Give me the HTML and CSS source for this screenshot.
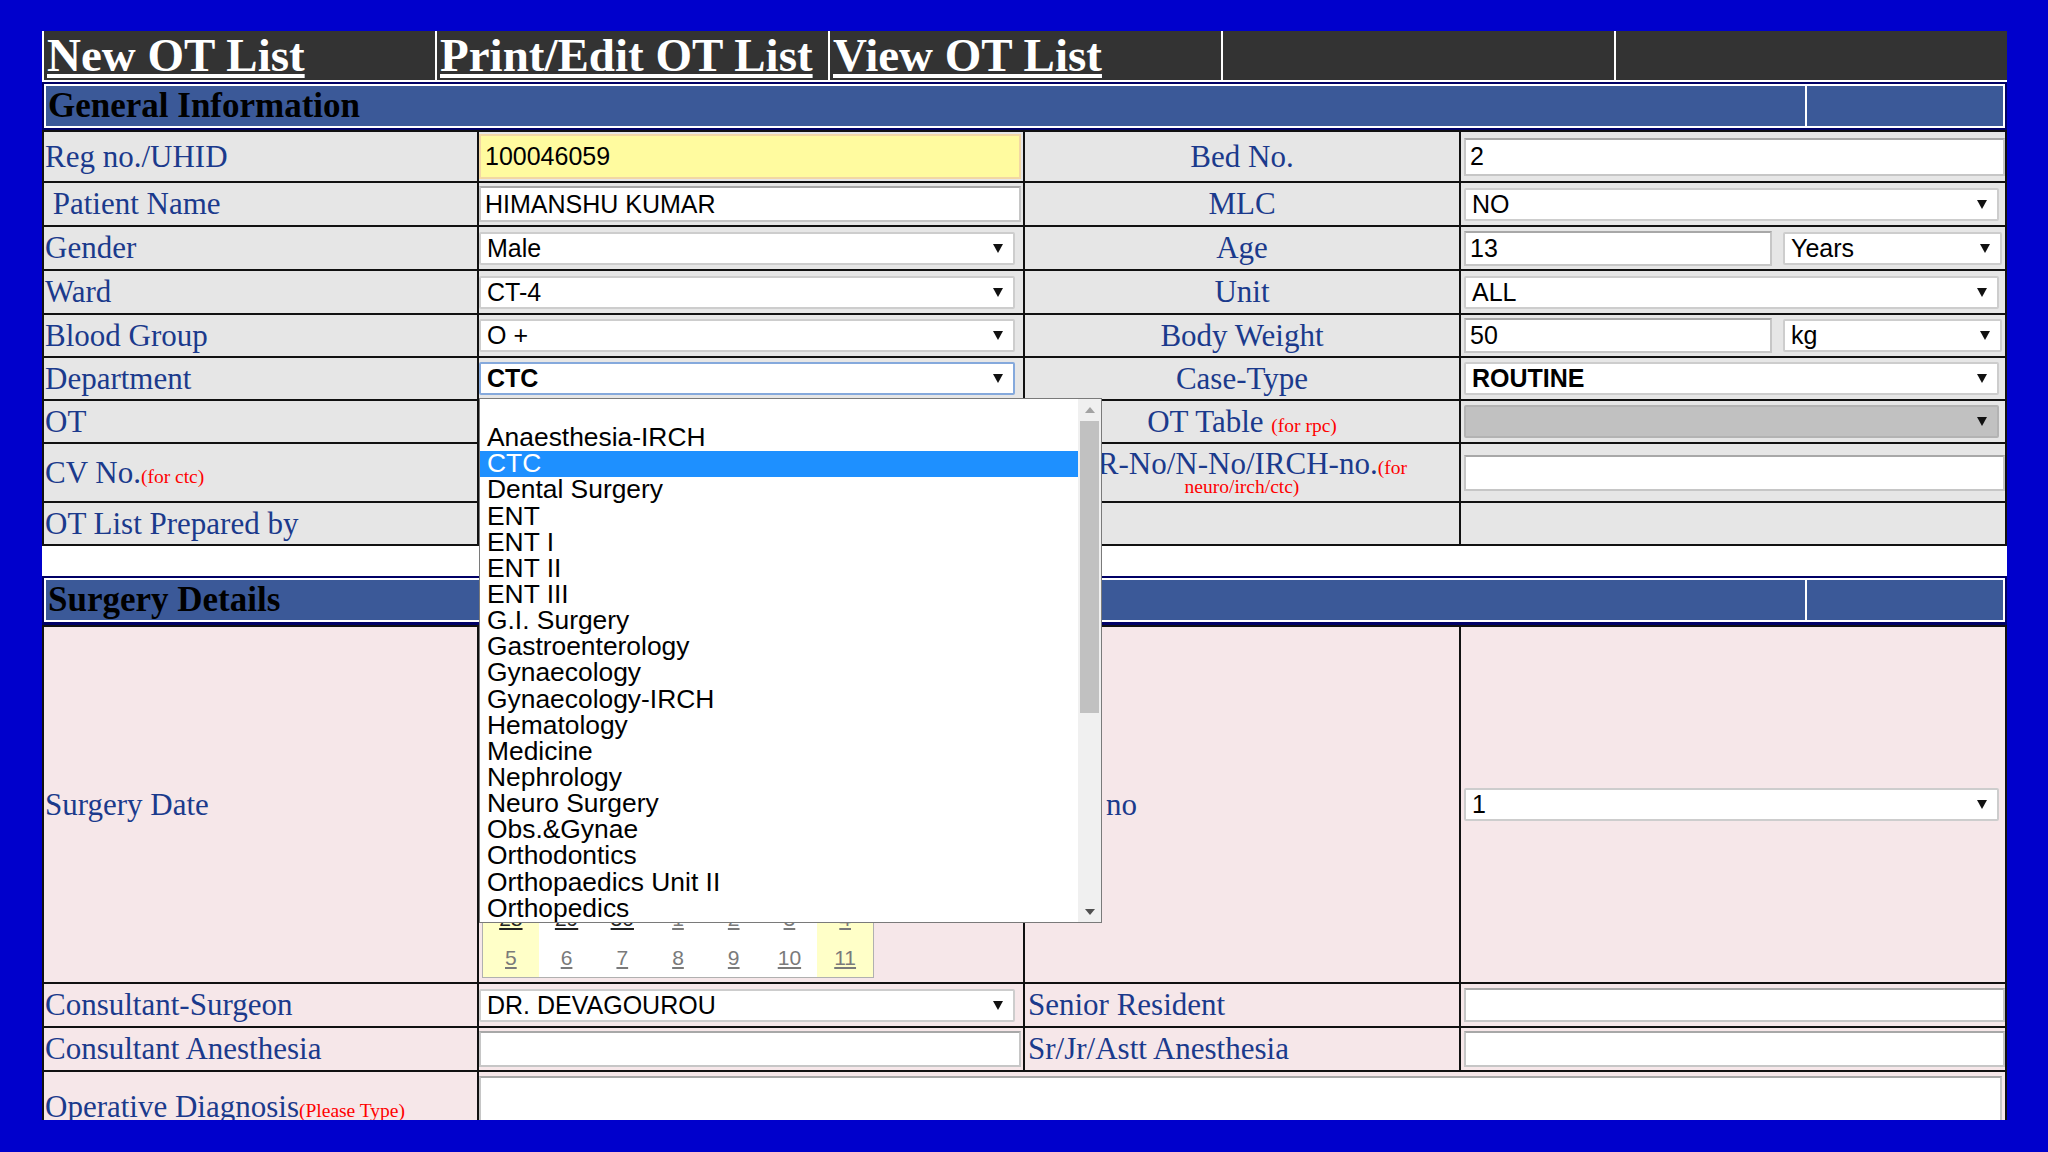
FILE: index.html
```html
<!DOCTYPE html>
<html>
  <head>
    <link rel="stylesheet" href="styles.css">
  </head>
  <body>
    <div class="page">
      <div class="top-nav">
        <div class="nav-cell"><a href="#">New OT List</a></div>
        <div class="nav-cell"><a href="#">Print/Edit OT List</a></div>
        <div class="nav-cell"><a href="#">View OT List</a></div>
        <div class="nav-cell"></div>
        <div class="nav-cell"></div>
      </div>

      <div class="section-wrap">
        <div class="section-head">
          <div class="head-title">General Information</div>
          <div class="head-end"></div>
        </div>
      </div>

      <div class="form general">
        <div class="cell"><span class="label">Reg no./UHID</span></div>
        <div class="cell val"><input class="box uhid" value="100046059"></div>
        <div class="cell mid"><span class="label">Bed No.</span></div>
        <div class="cell val-r"><input class="box bed" value="2"></div>

        <div class="cell"><span class="label">&nbsp;Patient Name</span></div>
        <div class="cell val"><input class="box" value="HIMANSHU KUMAR"></div>
        <div class="cell mid"><span class="label">MLC</span></div>
        <div class="cell val-r"><div class="select"><span>NO</span></div></div>

        <div class="cell"><span class="label">Gender</span></div>
        <div class="cell val"><div class="select"><span>Male</span></div></div>
        <div class="cell mid"><span class="label">Age</span></div>
        <div class="cell val-r pair">
          <input class="box short" value="13">
          <div class="select"><span>Years</span></div>
        </div>

        <div class="cell"><span class="label">Ward</span></div>
        <div class="cell val"><div class="select"><span>CT-4</span></div></div>
        <div class="cell mid"><span class="label">Unit</span></div>
        <div class="cell val-r"><div class="select"><span>ALL</span></div></div>

        <div class="cell"><span class="label">Blood Group</span></div>
        <div class="cell val"><div class="select"><span>O +</span></div></div>
        <div class="cell mid"><span class="label">Body Weight</span></div>
        <div class="cell val-r pair">
          <input class="box short" value="50">
          <div class="select"><span>kg</span></div>
        </div>

        <div class="cell"><span class="label">Department</span></div>
        <div class="cell val dept">
          <div class="select focus bold"><span>CTC</span></div>
          <div class="dropdown">
            <div class="options">
              <div class="opt">&nbsp;</div>
              <div class="opt">Anaesthesia-IRCH</div>
              <div class="opt on">CTC</div>
              <div class="opt">Dental Surgery</div>
              <div class="opt">ENT</div>
              <div class="opt">ENT I</div>
              <div class="opt">ENT II</div>
              <div class="opt">ENT III</div>
              <div class="opt">G.I. Surgery</div>
              <div class="opt">Gastroenterology</div>
              <div class="opt">Gynaecology</div>
              <div class="opt">Gynaecology-IRCH</div>
              <div class="opt">Hematology</div>
              <div class="opt">Medicine</div>
              <div class="opt">Nephrology</div>
              <div class="opt">Neuro Surgery</div>
              <div class="opt">Obs.&amp;Gynae</div>
              <div class="opt">Orthodontics</div>
              <div class="opt">Orthopaedics Unit II</div>
              <div class="opt">Orthopedics</div>
            </div>
            <div class="scroll">
              <div class="sb-up"></div>
              <div class="sb-thumb"></div>
              <div class="sb-down"></div>
            </div>
          </div>
        </div>
        <div class="cell mid"><span class="label">Case-Type</span></div>
        <div class="cell val-r"><div class="select bold"><span>ROUTINE</span></div></div>

        <div class="cell"><span class="label">OT</span></div>
        <div class="cell val"><div class="select"><span>CTVS OT</span></div></div>
        <div class="cell mid"><span class="label">OT Table <span class="note">(for rpc)</span></span></div>
        <div class="cell val-r"><div class="select disabled"><span></span></div></div>

        <div class="cell"><span class="label">CV No.<span class="note">(for ctc)</span></span></div>
        <div class="cell val"><input class="box" value=""></div>
        <div class="cell mid"><span class="label wrap">CR-No/N-No/IRCH-no.<span class="note">(for<br>neuro/irch/ctc)</span></span></div>
        <div class="cell val-r"><input class="box" value=""></div>

        <div class="cell"><span class="label">OT List Prepared by</span></div>
        <div class="cell val"><div class="select"><span></span></div></div>
        <div class="cell"></div>
        <div class="cell"></div>
      </div>

      <div class="spacer"></div>

      <div class="section-wrap second">
        <div class="section-head">
          <div class="head-title">Surgery Details</div>
          <div class="head-end"></div>
        </div>
      </div>

      <div class="form surgery">
        <div class="cell"><span class="label">Surgery Date</span></div>
        <div class="cell val date-cell">
          <div class="calendar">
            <div class="cal-grid">
              <div class="day we cur">28</div><div class="day cur">29</div><div class="day cur">30</div><div class="day">1</div><div class="day">2</div><div class="day">3</div><div class="day we">4</div>
              <div class="day we">5</div><div class="day">6</div><div class="day">7</div><div class="day">8</div><div class="day">9</div><div class="day">10</div><div class="day we">11</div>
            </div>
          </div>
        </div>
        <div class="cell"><span class="label">Serial no</span></div>
        <div class="cell val-r"><div class="select"><span>1</span></div></div>

        <div class="cell"><span class="label">Consultant-Surgeon</span></div>
        <div class="cell val"><div class="select"><span>DR. DEVAGOUROU</span></div></div>
        <div class="cell"><span class="label side">Senior Resident</span></div>
        <div class="cell val-r"><input class="box slim" value=""></div>

        <div class="cell"><span class="label">Consultant Anesthesia</span></div>
        <div class="cell val"><input class="box" value=""></div>
        <div class="cell"><span class="label side">Sr/Jr/Astt Anesthesia</span></div>
        <div class="cell val-r"><input class="box" value=""></div>

        <div class="cell"><span class="label">Operative Diagnosis<span class="note">(Please Type)</span></span></div>
        <div class="cell val op-area"><textarea class="box diag"></textarea></div>
      </div>
    </div>
  </body>
</html>
```

FILE: styles.css
```css
* {
  box-sizing: border-box;
}
body {
  margin: 0;
  background-color: #0000cc;
  font-family: "Liberation Serif", "Times New Roman", serif;
}
.page {
  position: relative;
  margin: 31px 41px 0 42px;
  height: 1089px;
  overflow: hidden;
}

/* top links */
.top-nav {
  display: grid;
  grid-template-columns: repeat(5, 1fr);
  gap: 2px;
  padding: 0 0 2px 2px;
  background-color: #fff;
}
.nav-cell {
  height: 49px;
  line-height: 49px;
  padding-left: 3px;
  background-color: #333;
  white-space: nowrap;
}
.nav-cell a {
  color: #fff;
  font-size: 47px;
  font-weight: bold;
  text-decoration: underline;
}

/* blue section bars */
.section-wrap {
  border: 2px solid #000066;
}
.section-wrap.second {
  border-bottom-width: 3px;
}
.section-head {
  display: grid;
  grid-template-columns: 1fr 196px;
  gap: 2px;
  border: 2px solid #fff;
  background-color: #fff;
}
.head-title,
.head-end {
  height: 40px;
  background-color: #3b5998;
}
.head-title {
  padding-left: 2px;
  font-size: 35px;
  font-weight: bold;
  line-height: 40px;
  color: #000;
}

/* form grids */
.form {
  display: grid;
  grid-template-columns: 433px 544px 434px 544px;
  gap: 2px;
  padding: 2px;
  background-color: #111;
}
.general {
  grid-template-rows: 49px 42px 42px 42px 41px 41px 41px 57px 41px;
}
.surgery {
  grid-template-rows: 355px 42px 42px 70px;
}
.cell {
  display: flex;
  align-items: center;
  min-width: 0;
  padding-left: 1px;
  background-color: #e6e6e6;
}
.surgery .cell {
  background-color: #f6e7e9;
}
.cell.mid {
  justify-content: center;
  padding-left: 0;
}
.cell.val {
  padding: 0 2px 0 0;
}
.cell.val-r {
  padding: 0 0 0 3px;
}
.dept,
.date-cell {
  position: relative;
}
.label {
  font-size: 31px;
  color: #1b3a8c;
  white-space: nowrap;
}
.label.side {
  padding-left: 2px;
}
.label.wrap {
  padding-top: 4px;
  white-space: normal;
  line-height: 15px;
  text-align: center;
}
.note {
  font-size: 19.5px;
  color: #ff0000;
}
.spacer {
  height: 30px;
  background-color: #fff;
}

/* inputs */
.box {
  width: 100%;
  height: 36px;
  margin: 0;
  padding: 0 4px;
  border: 2px solid #c6c6c6;
  border-top-color: #a8a8a8;
  background-color: #fff;
  color: #000;
  font-family: "Liberation Sans", Arial, sans-serif;
  font-size: 25px;
  outline: none;
}
.box.uhid {
  height: 45px;
  background-color: #fffb9f;
  border-color: #f2d7a4;
}
.box.bed {
  height: 38px;
}
.box.slim {
  height: 34px;
}
.pair {
  gap: 11px;
}
.box.short {
  flex: 0 0 308px;
  width: 308px;
  height: 35px;
}
.select {
  display: flex;
  align-items: center;
  justify-content: space-between;
  width: calc(100% - 6px);
  height: 33px;
  padding: 0 10px 0 6px;
  border: 2px solid #cdcdcd;
  border-radius: 2px;
  background-color: #fff;
  color: #000;
  font-family: "Liberation Sans", Arial, sans-serif;
  font-size: 25px;
  white-space: nowrap;
}
.select::after {
  content: "";
  border-left: 5px solid transparent;
  border-right: 5px solid transparent;
  border-top: 9px solid #111;
}
.pair .select {
  flex: 1;
  width: auto;
  margin-right: 3px;
}
.select.bold {
  font-weight: bold;
}
.select.focus {
  border-color: #85a9dc;
}
.select.disabled {
  background-color: #c1c1c1;
  border-color: #b3b3b3;
}
.op-area {
  grid-column: span 3;
  align-items: flex-start;
}
.box.diag {
  width: calc(100% - 1px);
  height: 80px;
  margin-top: 4px;
  resize: none;
}

/* open department list */
.dropdown {
  position: absolute;
  top: 40px;
  left: 0;
  z-index: 10;
  display: flex;
  width: 623px;
  height: 525px;
  border: 1px solid #7a7a7a;
  background-color: #fff;
  font-family: "Liberation Sans", Arial, sans-serif;
  font-size: 26.4px;
}
.options {
  flex: 1;
}
.opt {
  height: 26.15px;
  line-height: 24px;
  padding-left: 7px;
  color: #000;
  white-space: nowrap;
}
.opt.on {
  background-color: #1e90ff;
  color: #fff;
}
.scroll {
  display: flex;
  flex-direction: column;
  align-items: center;
  width: 23px;
  background-color: #f0f0f0;
}
.sb-up,
.sb-down {
  display: flex;
  align-items: center;
  justify-content: center;
  width: 100%;
  height: 21px;
}
.sb-up::after {
  content: "";
  border-left: 5px solid transparent;
  border-right: 5px solid transparent;
  border-bottom: 6px solid #a3a3a3;
}
.sb-down {
  margin-top: auto;
}
.sb-down::after {
  content: "";
  border-left: 5px solid transparent;
  border-right: 5px solid transparent;
  border-top: 6px solid #505050;
}
.sb-thumb {
  width: 19px;
  height: 292px;
  margin-top: 1px;
  background-color: #c1c1c1;
}

/* date picker under the list */
.calendar {
  position: absolute;
  left: 3px;
  bottom: 4px;
  z-index: 1;
  width: 392px;
  padding-top: 40px;
  border: 1px solid #b0b0b0;
  background-color: #fff;
  font-family: "Liberation Sans", Arial, sans-serif;
}
.cal-grid {
  display: grid;
  grid-template-columns: repeat(7, 1fr);
}
.day {
  height: 39px;
  line-height: 39px;
  text-align: center;
  font-size: 21px;
  color: #7a7a7a;
  text-decoration: underline;
}
.day.cur {
  color: #222;
}
.day.we {
  background-color: #ffffc8;
}
```
